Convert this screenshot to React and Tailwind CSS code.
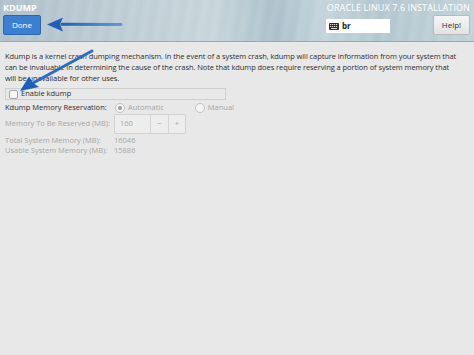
// App.jsx — Kdump installer screen
const FONT = { fontFamily: '"Open Sans", "DejaVu Sans", sans-serif' };

function KeyboardIcon() {
  return (
    <svg width="10" height="7" viewBox="0 0 10 7">
      <rect x="0" y="0" width="10" height="7" rx="1" fill="#2e2e2e" />
      <g fill="#ddd">
        <rect x="1" y="1" width="1.2" height="1" />
        <rect x="3" y="1" width="1.2" height="1" />
        <rect x="5" y="1" width="1.2" height="1" />
        <rect x="7" y="1" width="1.2" height="1" />
        <rect x="1" y="3" width="1.2" height="1" />
        <rect x="3" y="3" width="1.2" height="1" />
        <rect x="5" y="3" width="1.2" height="1" />
        <rect x="7" y="3" width="1.2" height="1" />
        <rect x="2" y="5" width="6" height="1" />
      </g>
    </svg>
  );
}

function Header() {
  return (
    <div
      className="relative h-[42px] w-full overflow-hidden border-b border-[#9aa9b1]"
      style={{
        background:
          "linear-gradient(90deg, #aebfc9 0%, #bccbd3 25%, #c6d4da 45%, #a9bfca 58%, #c2d3da 68%, #b2c6cf 80%, #c0d0d7 100%)",
      }}
    >
      <div
        className="absolute inset-0"
        style={{
          background:
            "repeating-linear-gradient(100deg, rgba(255,255,255,0) 0px, rgba(255,255,255,0.18) 6px, rgba(255,255,255,0) 14px)",
          opacity: 0.6,
        }}
      />
      <div className="relative flex h-full justify-between px-[3px]">
        <div className="flex flex-col">
          <span className="mt-[3px] text-[9px] font-bold leading-[10px] text-white">KDUMP</span>
          <button className="mt-[2px] h-[20px] w-[38px] rounded-[2px] border border-[#2d64aa] bg-[#3b7fd2] text-[8px] text-white">
            Done
          </button>
        </div>
        <div className="flex flex-col items-end pr-[1px]">
          <span className="mt-[3px] text-[9px] leading-[10px] tracking-[0.1px] text-white">
            ORACLE LINUX 7.6 INSTALLATION
          </span>
          <div className="mt-[2px] flex items-center gap-[43px]">
            <div className="mt-[2px] flex h-[14px] w-[64px] items-center gap-[3px] bg-white px-[3px]">
              <KeyboardIcon />
              <span className="text-[8px] font-bold leading-none text-[#222]">br</span>
            </div>
            <button className="h-[20px] w-[37px] rounded-[2px] border border-[#b9b9b9] bg-gradient-to-b from-[#f6f6f6] to-[#e2e2e2] text-[8px] text-[#333]">
              Help!
            </button>
          </div>
        </div>
      </div>
    </div>
  );
}

function Radio({ checked, label }) {
  return (
    <div className="flex items-center gap-[3px]">
      <span className="flex h-[10px] w-[10px] items-center justify-center rounded-full border border-[#c4c4c4] bg-[#f4f4f4]">
        {checked && <span className="h-[4px] w-[4px] rounded-full bg-[#9a9a9a]" />}
      </span>
      <span className="text-[#a6a6a6]">{label}</span>
    </div>
  );
}

function Arrows() {
  return (
    <svg className="pointer-events-none absolute left-0 top-0" width="474" height="355">
      <defs>
        <linearGradient id="a1" x1="0" x2="1">
          <stop offset="0" stopColor="#1f5fb8" />
          <stop offset="1" stopColor="#3c7fd6" stopOpacity="0.7" />
        </linearGradient>
      </defs>
      {/* arrow to Done */}
      <path d="M121 24.5 L62 24.2" stroke="url(#a1)" strokeWidth="3" strokeLinecap="round" />
      <path d="M47 24.5 L63 17.5 L60 24.3 L63 31.5 Z" fill="#1f5fb8" />
      {/* arrow to checkbox */}
      <path d="M92 51 L33 83" stroke="#2b6cc4" strokeWidth="3" strokeLinecap="round" />
      <path d="M20 91 L29 76.5 L33 83 L39 87 Z" fill="#1f5fb8" />
    </svg>
  );
}

export default function App() {
  return (
    <div className="relative h-[355px] w-[474px] overflow-hidden bg-[#e8e8e8]" style={FONT}>
      <Header />
      <div className="px-[5px] pt-[9px] text-[7.5px] text-[#2e2e2e]">
        <p className="whitespace-nowrap leading-[11px] tracking-[-0.08px]">
          Kdump is a kernel crash dumping mechanism. In the event of a system crash, kdump will capture information from your system that
          <br />
          can be invaluable in determining the cause of the crash. Note that kdump does require reserving a portion of system memory that
          <br />
          will be unavailable for other uses.
        </p>
        <div className="mt-[4px] flex h-[12px] w-[221px] items-center gap-[3px] border border-[#cfcfcf] pl-[3px]">
          <span className="h-[9px] w-[9px] rounded-[2px] border border-[#a8a8a8] bg-[#f7f7f7]" />
          <span>Enable kdump</span>
        </div>
        <div className="mt-[2px] flex h-[12px] items-center">
          <span className="w-[110px]">Kdump Memory Reservation:</span>
          <div className="flex gap-[31px]">
            <Radio checked label="Automatic" />
            <Radio label="Manual" />
          </div>
        </div>
        <div className="flex items-center text-[#a6a6a6]">
          <span className="w-[109px]">Memory To Be Reserved (MB):</span>
          <div className="flex h-[20px] w-[72px] items-stretch rounded-[2px] border border-[#d2d2d2] bg-[#ededed]">
            <span className="flex w-[36px] items-center pl-[5px]">160</span>
            <span className="flex w-[18px] items-center justify-center border-l border-[#d6d6d6]">−</span>
            <span className="flex w-[18px] items-center justify-center border-l border-[#d6d6d6]">+</span>
          </div>
        </div>
        <div className="mt-[1px] leading-[10px] text-[#a6a6a6]">
          <div className="flex">
            <span className="w-[109px]">Total System Memory (MB):</span>
            <span>16046</span>
          </div>
          <div className="flex">
            <span className="w-[109px]">Usable System Memory (MB):</span>
            <span>15886</span>
          </div>
        </div>
      </div>
      <Arrows />
    </div>
  );
}
